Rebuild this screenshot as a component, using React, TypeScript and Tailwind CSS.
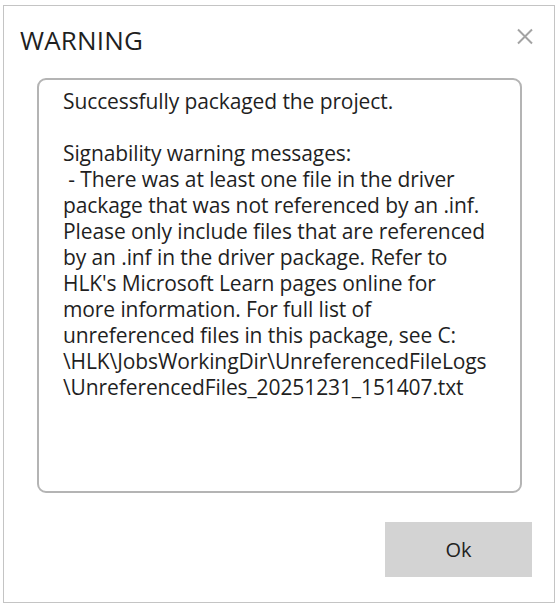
const LINES = [
  "Successfully packaged the project.",
  "",
  "Signability warning messages:",
  " - There was at least one file in the driver",
  "package that was not referenced by an .inf.",
  "Please only include files that are referenced",
  "by an .inf in the driver package. Refer to",
  "HLK's Microsoft Learn pages online for",
  "more information. For full list of",
  "unreferenced files in this package, see C:",
  "\\HLK\\JobsWorkingDir\\UnreferencedFileLogs",
  "\\UnreferencedFiles_20251231_151407.txt",
];

export default function App() {
  return (
    <div
      className="w-[556px] h-[604px] bg-white pt-[5px] pl-[3px] text-[#1f1f1f]"
      style={{ fontFamily: '"Open Sans", "Noto Sans", sans-serif' }}
    >
      <div className="w-[552px] h-[598px] border border-[#c4c4c4] flex flex-col">
        {/* header */}
        <div className="flex items-start justify-between h-[72px]">
          <h1 className="ml-[16px] mt-[18px] text-[26px] leading-[32px] tracking-[0.2px]">
            WARNING
          </h1>
          <button className="mt-[22px] mr-[21px] text-[#a3a3a3]">
            <svg width="16" height="17" viewBox="0 0 16 17" fill="none">
              <path
                d="M1 1.5 L15 15.5 M15 1.5 L1 15.5"
                stroke="currentColor"
                strokeWidth="2"
              />
            </svg>
          </button>
        </div>

        {/* message box */}
        <div className="ml-[33px] w-[485px] h-[415px] border-2 border-[#b4b4b4] rounded-[9px] pl-[24px] pt-[8px]">
          {LINES.map((line, i) => (
            <div
              key={i}
              className="whitespace-pre text-[21px] leading-[26px] h-[26px] tracking-[-0.1px]"
            >
              {line}
            </div>
          ))}
        </div>

        {/* footer */}
        <div className="flex justify-end mt-[29px] mr-[22px]">
          <button className="w-[147px] h-[55px] bg-[#d3d3d3] text-[20px] text-[#222]">
            Ok
          </button>
        </div>
      </div>
    </div>
  );
}
